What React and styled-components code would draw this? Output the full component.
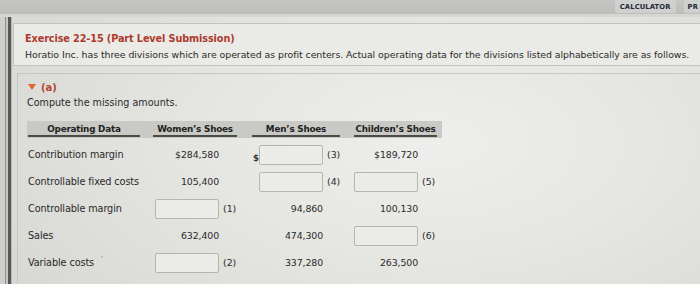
import React from "react";
import styled, { createGlobalStyle } from "styled-components";

const Global = createGlobalStyle`
  html, body { margin: 0; padding: 0; }
  body {
    width: 700px;
    height: 284px;
    overflow: hidden;
    font-family: "DejaVu Sans", Verdana, sans-serif;
    color: #2b2b2b;
    background: radial-gradient(ellipse 70% 90% at 62% 50%, #eeeeec 0%, #e6e6e3 45%, #d8d8d4 100%);
  }
`;

const Page = styled.div`
  width: 700px;
  height: 284px;
  display: flex;
  flex-direction: column;
  overflow: hidden;
`;

const TopBar = styled.div`
  height: 14px;
  flex: none;
  display: flex;
  justify-content: flex-end;
  align-items: flex-start;
  gap: 8px;
  background: linear-gradient(#c6c6c4, #bdbdbb);
  border-bottom: 3px solid #d6d6d3;
  overflow: hidden;
`;

const TopButton = styled.div`
  height: 13px;
  padding: 0 ${(p) => (p.$edge ? "2px 0 4px" : "5px")};
  display: flex;
  align-items: center;
  font-size: 6.8px;
  font-weight: bold;
  letter-spacing: 0.1px;
  color: #262a3a;
  background: #d0d0ce;
  border-radius: 0 0 2px 2px;
  white-space: nowrap;
`;

const Body = styled.div`
  flex: 1;
  display: flex;
  min-height: 0;
`;

const LeftRail = styled.div`
  width: 12px;
  flex: none;
  background: linear-gradient(
    to right,
    #cfcfcd 0 5px,
    #8e8e8c 5px 6px,
    #c6c6c4 6px 8px,
    #585856 8px 11px,
    #b8b8b5 11px 12px
  );
`;

const Main = styled.div`
  flex: 1;
  min-width: 0;
  display: flex;
  flex-direction: column;
`;

const HeaderBox = styled.div`
  margin: 6px -4px 0 1px;
  padding: 8px 11px 3px 11px;
  border: 1px solid #c3c3bf;
  background: #eaeae7;
`;

const Title = styled.div`
  font-size: 9.7px;
  font-weight: bold;
  line-height: 14px;
  color: #ad3a2b;
  letter-spacing: -0.1px;
  white-space: nowrap;
`;

const Intro = styled.div`
  margin-top: 2px;
  font-size: 9.4px;
  line-height: 14px;
  color: #2a2a2a;
  white-space: nowrap;
  letter-spacing: -0.05px;
`;

const Section = styled.div`
  flex: 1;
  margin: 7px -4px 0 5px;
  padding: 6px 0 0 9px;
  border-top: 1px solid #c6c6c2;
  border-left: 1px solid #c6c6c2;
`;

const PartHeading = styled.div`
  display: flex;
  align-items: center;
  gap: 5px;
  height: 14px;
  font-size: 10px;
  font-weight: bold;
  color: #b4452f;
`;

const Caret = styled.span`
  width: 0;
  height: 0;
  border-left: 4.5px solid transparent;
  border-right: 4.5px solid transparent;
  border-top: 6px solid #e2652c;
  margin-left: 1px;
`;

const Instructions = styled.div`
  margin-top: 2px;
  font-size: 9.6px;
  line-height: 14px;
  color: #2a2a2a;
`;

const Table = styled.div`
  margin-top: 11px;
  width: 415px;
  display: grid;
  grid-template-columns: 120px 104px 95px 96px;
  grid-template-rows: 20px;
  grid-auto-rows: 27px;
`;

const HeadRow = styled.div`
  grid-column: 1 / -1;
  display: grid;
  grid-template-columns: subgrid;
  height: 17px;
  background: #c9c9c5;
  align-self: start;
`;

const HeadCell = styled.div`
  margin: 2px ${(p) => p.$r}px 0 ${(p) => p.$l}px;
  height: 12px;
  border-bottom: 2px solid #4a4a47;
  text-align: center;
  font-size: 8.8px;
  font-weight: bold;
  line-height: 12px;
  letter-spacing: -0.2px;
  white-space: nowrap;
  color: #222;
`;

const LabelCell = styled.div`
  display: flex;
  align-items: center;
  padding-left: 1px;
  font-size: 9.7px;
  letter-spacing: -0.1px;
  color: #2a2a2a;
  white-space: nowrap;
`;

const Speck = styled.span`
  margin-left: 7px;
  margin-top: -8px;
  font-size: 7px;
  color: #777;
`;

const DataCell = styled.div`
  display: flex;
  align-items: center;
`;

const Prefix = styled.span`
  width: 8px;
  flex: none;
  margin-top: 7px;
  padding-left: 2px;
  box-sizing: border-box;
  font-size: 8.5px;
  font-weight: bold;
  color: #333;
`;

const Value = styled.div`
  width: 64px;
  flex: none;
  text-align: right;
  font-size: 9.4px;
  letter-spacing: -0.1px;
  color: #2a2a2a;
`;

const Input = styled.div`
  width: 64px;
  height: 20px;
  flex: none;
  box-sizing: border-box;
  border: 1px solid #b5b5b1;
  border-radius: 2px;
  background: #ebebe8;
`;

const Note = styled.span`
  margin-left: 4px;
  font-size: 9.4px;
  color: #2a2a2a;
`;

const rows = [
  { label: "Contribution margin", cells: [{ v: "$284,580" }, { input: true, dollar: true, note: "(3)" }, { v: "$189,720" }] },
  { label: "Controllable fixed costs", cells: [{ v: "105,400" }, { input: true, note: "(4)" }, { input: true, note: "(5)" }] },
  { label: "Controllable margin", cells: [{ input: true, note: "(1)" }, { v: "94,860" }, { v: "100,130" }] },
  { label: "Sales", cells: [{ v: "632,400" }, { v: "474,300" }, { input: true, note: "(6)" }] },
  { label: "Variable costs", speck: true, cells: [{ input: true, note: "(2)" }, { v: "337,280" }, { v: "263,500" }] },
];

const heads = [
  { t: "Operating Data", l: 1, r: 7 },
  { t: "Women\u2019s Shoes", l: 6, r: 14 },
  { t: "Men\u2019s Shoes", l: 1, r: 6 },
  { t: "Children\u2019s Shoes", l: 8, r: 5 },
];

export default function App() {
  return (
    <Page>
      <Global />
      <TopBar>
        <TopButton>CALCULATOR</TopButton>
        <TopButton $edge>PR</TopButton>
      </TopBar>
      <Body>
        <LeftRail />
        <Main>
          <HeaderBox>
            <Title>Exercise 22-15 (Part Level Submission)</Title>
            <Intro>
              Horatio Inc. has three divisions which are operated as profit centers. Actual operating data for the divisions listed alphabetically are as follows.
            </Intro>
          </HeaderBox>
          <Section>
            <PartHeading>
              <Caret />
              (a)
            </PartHeading>
            <Instructions>Compute the missing amounts.</Instructions>
            <Table>
              <HeadRow>
                {heads.map((h) => (
                  <HeadCell key={h.t} $l={h.l} $r={h.r}>
                    {h.t}
                  </HeadCell>
                ))}
              </HeadRow>
              {rows.map((r) => (
                <React.Fragment key={r.label}>
                  <LabelCell>
                    {r.label}
                    {r.speck && <Speck>'</Speck>}
                  </LabelCell>
                  {r.cells.map((c, i) => (
                    <DataCell key={i}>
                      <Prefix>{c.dollar ? "$" : ""}</Prefix>
                      {c.input ? <Input /> : <Value>{c.v}</Value>}
                      {c.note && <Note>{c.note}</Note>}
                    </DataCell>
                  ))}
                </React.Fragment>
              ))}
            </Table>
          </Section>
        </Main>
      </Body>
    </Page>
  );
}
